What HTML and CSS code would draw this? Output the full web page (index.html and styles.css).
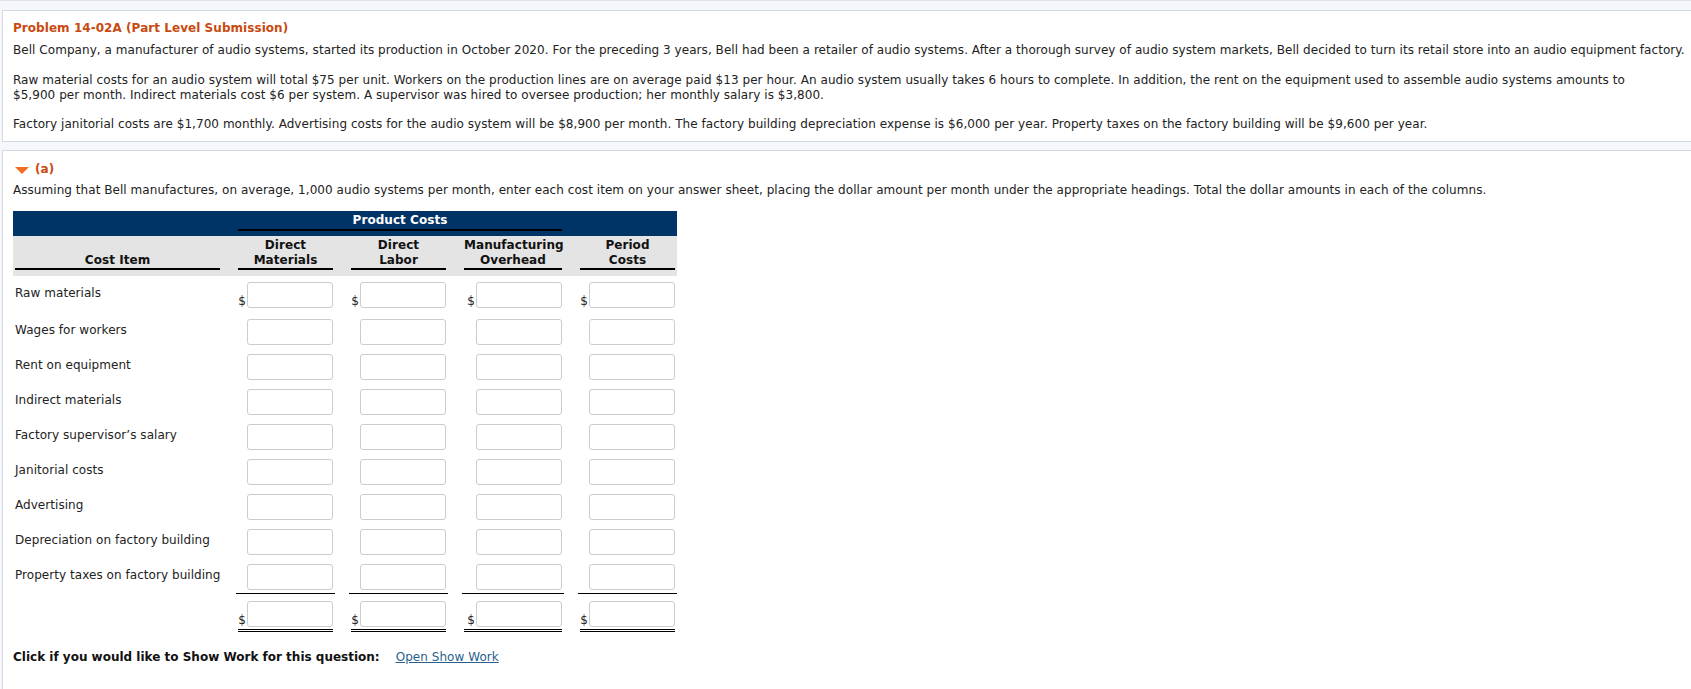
FILE: index.html
```html
<!DOCTYPE html>
<html lang="en">
<head>
<meta charset="utf-8">
<title>Problem 14-02A</title>
<link rel="stylesheet" href="styles.css">
</head>
<body>
<div class="page">
  <section class="panel intro">
    <h1 class="title">Problem 14-02A (Part Level Submission)</h1>
    <p class="text">Bell Company, a manufacturer of audio systems, started its production in October 2020. For the preceding 3 years, Bell had been a retailer of audio systems. After a thorough survey of audio system markets, Bell decided to turn its retail store into an audio equipment factory.</p>
    <p class="text">Raw material costs for an audio system will total $75 per unit. Workers on the production lines are on average paid $13 per hour. An audio system usually takes 6 hours to complete. In addition, the rent on the equipment used to assemble audio systems amounts to<br>$5,900 per month. Indirect materials cost $6 per system. A supervisor was hired to oversee production; her monthly salary is $3,800.</p>
    <p class="text">Factory janitorial costs are $1,700 monthly. Advertising costs for the audio system will be $8,900 per month. The factory building depreciation expense is $6,000 per year. Property taxes on the factory building will be $9,600 per year.</p>
  </section>

  <section class="panel part">
    <h2 class="part-title"><span class="caret"></span>(a)</h2>
    <p class="text">Assuming that Bell manufactures, on average, 1,000 audio systems per month, enter each cost item on your answer sheet, placing the dollar amount per month under the appropriate headings. Total the dollar amounts in each of the columns.</p>

    <div class="sheet">
      <div class="row band">
        <div class="group">Product Costs</div>
      </div>
      <div class="row heads">
        <div class="head">Cost Item</div>
        <div class="head">Direct<br>Materials</div>
        <div class="head">Direct<br>Labor</div>
        <div class="head">Manufacturing<br>Overhead</div>
        <div class="head">Period<br>Costs</div>
      </div>

      <div class="row item first">
        <div class="label">Raw materials</div>
        <div class="amt"><span class="cur">$</span><input class="field" type="text"></div>
        <div class="amt"><span class="cur">$</span><input class="field" type="text"></div>
        <div class="amt"><span class="cur">$</span><input class="field" type="text"></div>
        <div class="amt"><span class="cur">$</span><input class="field" type="text"></div>
      </div>
      <div class="row item">
        <div class="label">Wages for workers</div>
        <div class="amt"><input class="field" type="text"></div>
        <div class="amt"><input class="field" type="text"></div>
        <div class="amt"><input class="field" type="text"></div>
        <div class="amt"><input class="field" type="text"></div>
      </div>
      <div class="row item">
        <div class="label">Rent on equipment</div>
        <div class="amt"><input class="field" type="text"></div>
        <div class="amt"><input class="field" type="text"></div>
        <div class="amt"><input class="field" type="text"></div>
        <div class="amt"><input class="field" type="text"></div>
      </div>
      <div class="row item">
        <div class="label">Indirect materials</div>
        <div class="amt"><input class="field" type="text"></div>
        <div class="amt"><input class="field" type="text"></div>
        <div class="amt"><input class="field" type="text"></div>
        <div class="amt"><input class="field" type="text"></div>
      </div>
      <div class="row item">
        <div class="label">Factory supervisor’s salary</div>
        <div class="amt"><input class="field" type="text"></div>
        <div class="amt"><input class="field" type="text"></div>
        <div class="amt"><input class="field" type="text"></div>
        <div class="amt"><input class="field" type="text"></div>
      </div>
      <div class="row item">
        <div class="label">Janitorial costs</div>
        <div class="amt"><input class="field" type="text"></div>
        <div class="amt"><input class="field" type="text"></div>
        <div class="amt"><input class="field" type="text"></div>
        <div class="amt"><input class="field" type="text"></div>
      </div>
      <div class="row item">
        <div class="label">Advertising</div>
        <div class="amt"><input class="field" type="text"></div>
        <div class="amt"><input class="field" type="text"></div>
        <div class="amt"><input class="field" type="text"></div>
        <div class="amt"><input class="field" type="text"></div>
      </div>
      <div class="row item">
        <div class="label">Depreciation on factory building</div>
        <div class="amt"><input class="field" type="text"></div>
        <div class="amt"><input class="field" type="text"></div>
        <div class="amt"><input class="field" type="text"></div>
        <div class="amt"><input class="field" type="text"></div>
      </div>
      <div class="row item last">
        <div class="label">Property taxes on factory building</div>
        <div class="amt"><input class="field" type="text"></div>
        <div class="amt"><input class="field" type="text"></div>
        <div class="amt"><input class="field" type="text"></div>
        <div class="amt"><input class="field" type="text"></div>
      </div>
      <div class="row total">
        <div class="label"></div>
        <div class="amt"><span class="cur">$</span><input class="field" type="text"></div>
        <div class="amt"><span class="cur">$</span><input class="field" type="text"></div>
        <div class="amt"><span class="cur">$</span><input class="field" type="text"></div>
        <div class="amt"><span class="cur">$</span><input class="field" type="text"></div>
      </div>
    </div>

    <p class="showwork"><strong class="prompt">Click if you would like to Show Work for this question:</strong><a class="link" href="#">Open Show Work</a></p>
  </section>
</div>
</body>
</html>
```

FILE: styles.css
```css
html, body {
  margin: 0;
  padding: 0;
}
body {
  background: #f5f7fa;
  font-family: "DejaVu Sans", Verdana, sans-serif;
  font-size: 12px;
  line-height: 15px;
  letter-spacing: 0.05px;
  color: #222;
}
.page {
  border-top: 1px solid #dfe3ea;
  padding-top: 9px;
  min-height: 679px;
}
.panel {
  margin-left: 2px;
  background: #fff;
  border-left: 1px solid #d3d9e2;
  border-top: 1px solid #d3d9e2;
  padding-left: 10px;
}
.intro {
  border-bottom: 1px solid #d3d9e2;
  padding-top: 10px;
  padding-bottom: 9px;
  margin-bottom: 8px;
}
.part {
  padding-top: 11px;
  min-height: 527px;
}
.title {
  margin: 0 0 7px;
  font-size: 12px;
  line-height: 15px;
  font-weight: bold;
  color: #c94a10;
}
.text {
  margin: 0 0 15px;
  white-space: nowrap;
}
.intro .text:nth-of-type(2) {
  margin-bottom: 14px;
}
.intro .text:last-child {
  margin-bottom: 0;
}
.part-title {
  margin: 0 0 6px;
  font-size: 12px;
  line-height: 15px;
  font-weight: bold;
  color: #c94a10;
  display: flex;
  align-items: center;
}
.caret {
  width: 0;
  height: 0;
  border-left: 7px solid transparent;
  border-right: 7px solid transparent;
  border-top: 7px solid #f26d21;
  margin: 1px 6px 0 2px;
}
.part .text {
  margin-bottom: 13px;
}
.sheet {
  width: 664px;
}
.row {
  display: grid;
  grid-template-columns: 205px 95px 95px 98px 95px;
  column-gap: 18px;
  padding: 0 2px;
}
.band {
  background: #003366;
  height: 25px;
  box-sizing: border-box;
  padding-top: 2px;
}
.group {
  grid-column: 2 / 5;
  height: 16px;
  border-bottom: 2px solid #000;
  color: #fff;
  font-weight: bold;
  text-align: center;
}
.heads {
  background: #e4e4e4;
  height: 40px;
  box-sizing: border-box;
  padding-bottom: 6px;
  align-items: end;
}
.head {
  font-weight: bold;
  text-align: center;
  border-bottom: 2px solid #000;
  color: #111;
}
.item {
  align-items: start;
}
.label {
  padding-top: 10px;
  white-space: nowrap;
}
.amt {
  display: flex;
  justify-content: flex-end;
  align-items: flex-end;
  padding: 6px 0 3px;
}
.first .amt {
  padding-bottom: 5px;
}
.last .amt {
  border-bottom: 1px solid #000;
  margin: 0 -2px;
  padding-left: 2px;
  padding-right: 2px;
}
.total .amt {
  padding: 7px 0 2px;
  border-bottom: 3px double #000;
}
.cur {
  line-height: 15px;
  margin-right: 1px;
  margin-bottom: -1px;
  color: #222;
}
.field {
  width: 86px;
  height: 26px;
  box-sizing: border-box;
  margin: 0;
  border: 1px solid #cccccc;
  border-radius: 3px;
  background: #fff;
  font: inherit;
  padding: 0 4px;
}
.showwork {
  margin: 18px 0 0;
  white-space: nowrap;
  color: #111;
}
.prompt {
  letter-spacing: 0;
}
.link {
  margin-left: 16px;
  color: #2b5f8e;
  text-decoration: underline;
}
```
